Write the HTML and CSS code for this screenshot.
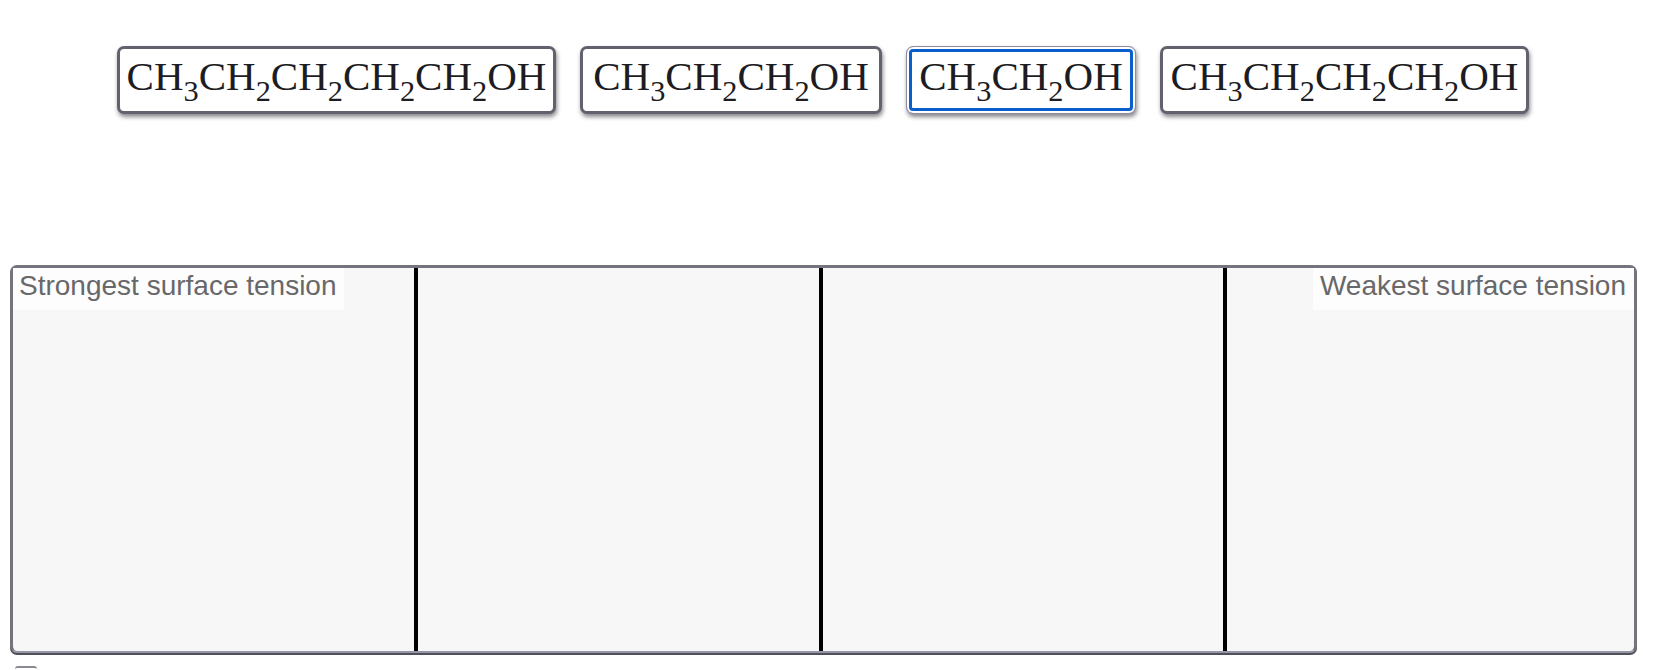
FILE: index.html
```html
<!DOCTYPE html>
<html lang="en">
<head>
<meta charset="utf-8">
<title>Surface tension ranking</title>
<link rel="stylesheet" href="styles.css">
</head>
<body>
  <div class="bank">
    <div class="chip chip--w1"><span class="formula">CH<sub>3</sub>CH<sub>2</sub>CH<sub>2</sub>CH<sub>2</sub>CH<sub>2</sub>OH</span></div>
    <div class="chip chip--w2"><span class="formula">CH<sub>3</sub>CH<sub>2</sub>CH<sub>2</sub>OH</span></div>
    <div class="chip chip--w3 chip--selected"><span class="formula">CH<sub>3</sub>CH<sub>2</sub>OH</span></div>
    <div class="chip chip--w4"><span class="formula">CH<sub>3</sub>CH<sub>2</sub>CH<sub>2</sub>CH<sub>2</sub>OH</span></div>
  </div>

  <div class="ranking">
    <div class="slot"><span class="label">Strongest surface tension</span></div>
    <div class="slot"></div>
    <div class="slot"></div>
    <div class="slot slot--end"><span class="label">Weakest surface tension</span></div>
  </div>

  <div class="footer-box"></div>
</body>
</html>
```

FILE: styles.css
```css
html, body {
  margin: 0;
  padding: 0;
  overflow: hidden;
  background: #ffffff;
}

body {
  font-family: "Liberation Sans", Arial, sans-serif;
}

.bank {
  display: flex;
  gap: 24px;
  padding: 46px 0 0 117px;
}

.chip {
  box-sizing: border-box;
  height: 68px;
  display: flex;
  align-items: center;
  justify-content: center;
  background: #ffffff;
  border: 3px solid #62626e;
  border-radius: 7px;
  box-shadow: 1px 3px 4px rgba(40, 40, 50, 0.55);
}

.chip--w1 { width: 439px; }
.chip--w2 { width: 302px; }
.chip--w3 { width: 230px; }
.chip--w4 { width: 369px; }

.chip--selected {
  border: 1px solid #8c8ca2;
  box-shadow: inset 0 0 0 2px #ffffff, inset 0 0 0 5px #0a5fcc, 1px 3px 4px rgba(40, 40, 50, 0.55);
}

.formula {
  font-family: "Liberation Serif", "Times New Roman", serif;
  font-size: 41px;
  line-height: 41px;
  color: #1c1c22;
  white-space: nowrap;
  margin-top: 2px;
}

.formula sub {
  font-size: 0.74em;
  line-height: 1;
  vertical-align: -11px;
}

.ranking {
  box-sizing: border-box;
  margin: 151px 0 0 10px;
  width: 1627px;
  height: 388px;
  display: grid;
  grid-template-columns: 401px 405px 404px 1fr;
  background: #f7f7f7;
  border: 3px solid #74747f;
  border-bottom: 2px solid #9696a6;
  border-radius: 7px;
  box-shadow: 0 2px 0 #50505c;
}

.slot {
  display: flex;
  align-items: flex-start;
  justify-content: flex-start;
}

.slot + .slot {
  border-left: 4px solid #000000;
}

.slot--end {
  justify-content: flex-end;
}

.label {
  display: block;
  background: #fdfdfd;
  color: #68686a;
  font-size: 28px;
  line-height: 32px;
  padding: 2px 7px 8px 6px;
  white-space: nowrap;
}

.slot--end .label {
  padding: 2px 8px 8px 7px;
}

.footer-box {
  margin: 13px 0 0 15px;
  width: 22px;
  height: 14px;
  border-top: 2px solid #8a8a94;
  border-radius: 3px 3px 0 0;
}
```
